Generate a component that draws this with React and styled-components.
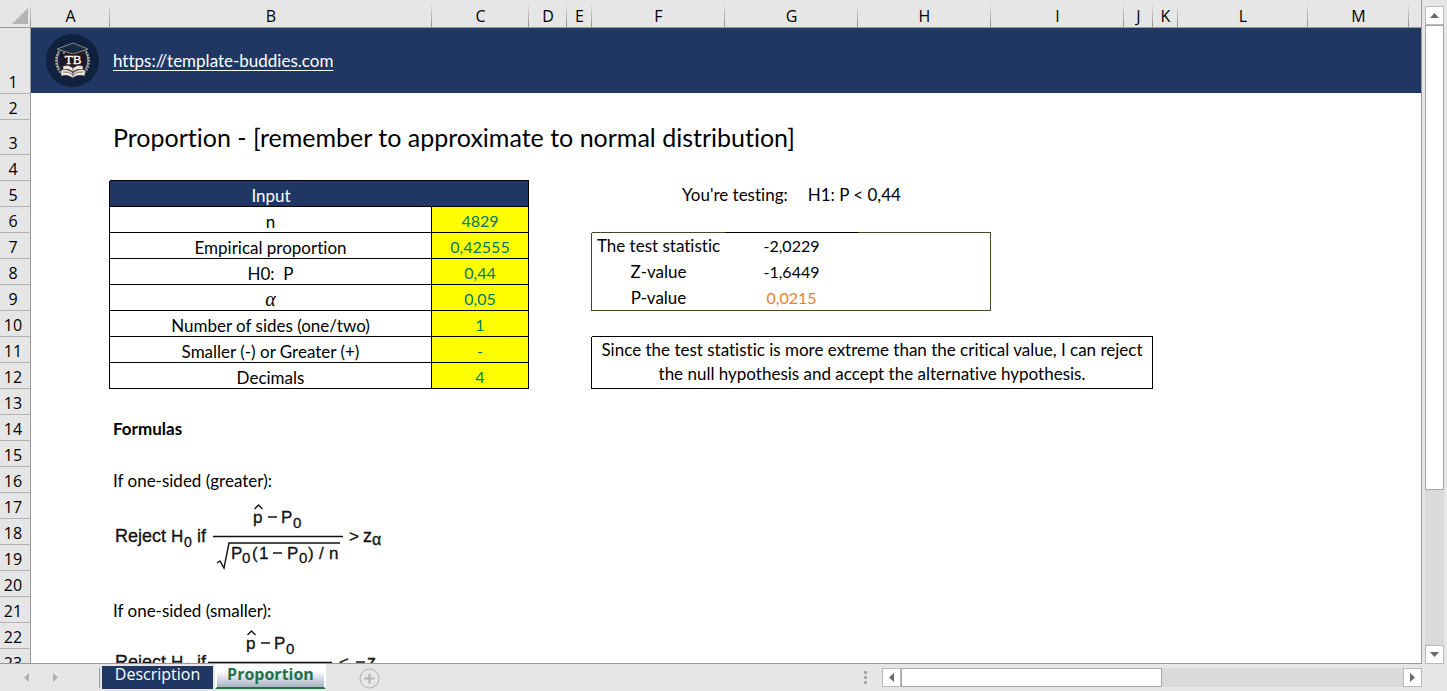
import React from "react";
import styled, { createGlobalStyle, css } from "styled-components";

const NAVY = "#203764";
const CHROME = "#e6e6e6";
const LINE = "#999999";
const OLIVE = "#3a4a22";
const BLACK = "#000000";

const GlobalStyle = createGlobalStyle`
  *, *::before, *::after { box-sizing: border-box; }
  body { margin: 0; background: ${CHROME}; }
  button { font: inherit; margin: 0; padding: 0; }
`;

const Workbook = styled.div`
  display: flex;
  flex-direction: column;
  height: 100vh;
  background: ${CHROME};
  color: ${BLACK};
  font-family: Lato, "Liberation Sans", sans-serif;
  font-size: 17px;
  font-variant-ligatures: none;
  line-height: 24px;
  overflow: hidden;
`;

const Body = styled.div`
  display: flex;
  flex: 1;
  min-height: 0;
`;

const SheetView = styled.main`
  flex: 1;
  min-width: 0;
  overflow: hidden;
  border-right: 1px solid ${LINE};
  border-bottom: 1px solid ${LINE};
  background: #ffffff;
`;

const Grid = styled.table`
  width: 100%;
  table-layout: fixed;
  border-collapse: separate;
  border-spacing: 0;
`;

const Col = styled.col`
  width: ${(p) => (p.$w ? `${p.$w}px` : "auto")};
`;

const headerText = css`
  padding: 0;
  background-color: ${CHROME};
  font-family: "Open Sans", "Noto Sans", sans-serif;
  font-size: 16px;
  font-weight: 400;
  line-height: 22px;
  text-align: center;
`;

const ColumnHeader = styled.th`
  ${headerText}
  height: 28px;
  padding-top: 4px;
  border-bottom: 1px solid ${LINE};
  background-image: linear-gradient(#e6e6e6 10%, #999999 90%);
  background-size: ${(p) => (p.$last ? "0" : "1px")} 100%;
  background-position: right;
  background-repeat: no-repeat;
`;

const Corner = styled(ColumnHeader)`
  padding: 0 3px 3px 0;
  text-align: right;
  vertical-align: bottom;

  svg { display: block; margin-left: auto; }
`;

const RowHeader = styled.th`
  ${headerText}
  padding-right: 4px;
  vertical-align: bottom;
  border-right: 1px solid ${LINE};
  border-bottom: 1px solid #b4b4b4;
`;

const Line = styled.tr`
  height: ${(p) => p.$h}px;
`;

const Cell = styled.td`
  position: relative;
  padding: 0 0 0 3px;
  white-space: nowrap;
  vertical-align: bottom;
  ${(p) => p.$right && css`border-right: 1px solid ${p.$right};`}
  ${(p) => p.$bottom && css`border-bottom: 1px solid ${p.$bottom};`}
`;

const BannerCell = styled(Cell)`
  padding: 0 0 0 ${(p) => (p.$logo ? 15 : 3)}px;
  border-bottom: 1px solid #ffffff;
  background: ${NAVY};
  vertical-align: middle;

  svg { display: block; }
`;

const SiteLink = styled.a`
  color: #ffffff;
  text-decoration: underline;
  text-decoration-thickness: 1px;
  text-underline-offset: 3px;
`;

const Title = styled.h1`
  margin: 0;
  font-size: 25px;
  font-weight: 400;
  line-height: 35px;
`;

const SectionTitle = styled.h2`
  margin: 0;
  font-size: 17px;
  font-weight: 700;
  line-height: 24px;
`;

const CenterCell = styled(Cell)`
  padding: 0;
  text-align: center;
`;

const InputLabel = styled(CenterCell)`
  line-height: 20px;
`;

const InputTitle = styled(InputLabel)`
  background: ${NAVY};
  color: #ffffff;
`;

const InputValue = styled(CenterCell)`
  background: #ffff00;
  color: #00786c;
  font-size: 16px;
  line-height: 22px;
`;

const ResultLabel = styled(CenterCell)`
  vertical-align: middle;
`;

const ResultValue = styled(ResultLabel)`
  color: ${(p) => p.$color || BLACK};
  font-size: 16px;
`;

const Conclusion = styled(CenterCell)`
  padding: 0 8px 2px;
  white-space: normal;
  vertical-align: middle;
`;

const Hypothesis = styled.span`
  margin-left: 20px;
`;

const Alpha = styled.i`
  font-family: "Liberation Serif", serif;
  font-size: 20px;
`;

const FloatingPicture = styled.svg`
  position: absolute;
  top: ${(p) => p.$top}px;
  left: 0;
  font-family: "Liberation Sans", Arial, sans-serif;
  font-size: 17px;
  fill: #111111;
`;

const VerticalBar = styled.div`
  display: flex;
  flex-direction: column;
  width: 25px;
  padding: 6px 3px 0;
`;

const HorizontalBar = styled.div`
  display: flex;
  width: 540px;
  height: 19px;
`;

const ScrollButton = styled.button`
  display: flex;
  align-items: center;
  justify-content: center;
  flex: none;
  width: 19px;
  height: 19px;
  border: 1px solid #b8b8b8;
  background: #ffffff;
`;

const Track = styled.div`
  display: flex;
  flex: 1;
  flex-direction: ${(p) => (p.$vertical ? "column" : "row")};
  background: #dadada;
`;

const Thumb = styled.div`
  flex: 0 0 ${(p) => p.$size};
  border: 1px solid #a6a6a6;
  background: #ffffff;
`;

const BottomBar = styled.footer`
  display: flex;
  align-items: center;
  height: 27px;
  padding-right: 25px;
`;

const SheetNav = styled.div`
  display: flex;
  justify-content: space-between;
  width: 100px;
  height: 20px;
  padding: 0 41px 0 24px;
  border-right: 1px solid ${LINE};
`;

const PlainButton = styled.button`
  display: flex;
  align-items: center;
  border: 0;
  background: transparent;
`;

const Tabs = styled.nav`
  display: flex;
  align-self: flex-start;
  gap: 2px;
  flex: 1;
  padding-left: 2px;
`;

const Tab = styled.button`
  width: 111px;
  height: 25px;
  padding-bottom: 8px;
  border: 0;
  border-top: 2px solid ${CHROME};
  background: ${NAVY};
  color: #ffffff;
  font-family: "Open Sans", "Noto Sans", sans-serif;
  font-size: 16px;
  line-height: 16px;
  ${(p) => p.$active && css`
    padding-bottom: 4px;
    border: 2px solid #ffffff;
    border-top: 0;
    border-bottom: 2px solid #217346;
    background: linear-gradient(#ffffff 30%, #a9b3c8);
    color: #217346;
    font-weight: 700;
  `}
`;

const AddButton = styled(PlainButton)`
  margin: 4px 0 0 31px;
`;

const Grip = styled.div`
  width: 3px;
  height: 14px;
  margin-right: 15px;
  background: repeating-linear-gradient(#a8a8a8 0 3px, transparent 3px 5px);
`;

const columns = [
  ["A", 79], ["B", 322], ["C", 97], ["D", 38], ["E", 25], ["F", 133], ["G", 133],
  ["H", 133], ["I", 133], ["J", 29], ["K", 25], ["L", 130], ["M", 101],
];

const arrows = {
  up: "M0 5 L4.5 0 L9 5Z",
  down: "M0 0 L9 0 L4.5 5Z",
  left: "M5 0 L5 9 L0 4.5Z",
  right: "M0 0 L5 4.5 L0 9Z",
};

function Arrow({ dir, color = "#6a6a6a" }) {
  const upright = dir === "up" || dir === "down";
  return (
    <svg width={upright ? 9 : 5} height={upright ? 5 : 9} fill={color} aria-hidden="true">
      <path d={arrows[dir]} />
    </svg>
  );
}

function Logo() {
  return (
    <svg width="53" height="53" viewBox="0 0 53 53" role="img" aria-label="Template Buddies">
      <circle cx="26.5" cy="26.5" r="26.5" fill="#10203f" />
      <g fill="none" stroke="#b9aa98">
        <path d="M15 15 C8 22 9 33 15 39 M38 15 C45 22 44 33 38 39" strokeWidth="2" strokeDasharray="2 1" />
        <path d="M13 19 C10 25 11 31 14 35 M40 19 C43 25 42 31 39 35" strokeWidth="1" />
      </g>
      <path d="M17 17 V22 H37 V17" fill="#29161d" stroke="#6d3037" />
      <path d="M11 15 L27 9 L42 15 L27 20Z" fill="#182a40" stroke="#8c8982" strokeWidth="1" />
      <path d="M18 18 V25" stroke="#ded3c5" />
      <rect x="15" y="20" width="23" height="12" fill="#24141b" />
      <text x="27" y="30" textAnchor="middle" fontFamily="Liberation Serif, serif" fontSize="13" stroke="#ffffff" strokeWidth=".4" fill="#ffffff">TB</text>
      <path d="M17 32 Q23 30 27 34 Q31 30 37 32 V36 Q31 34 27 38 Q23 34 17 36Z" fill="#f3e9dc" stroke="#302a2b" strokeWidth=".6" />
      <path d="M15 36 Q22 34 27 39 Q32 34 39 36 V42 Q31 40 27 44 Q22 40 15 42Z" fill="#f4ebdf" stroke="#302a2b" strokeWidth=".6" />
      <path d="M17 38 Q23 37 27 41 Q31 37 37 38 M27 34 V43" fill="none" stroke="#5b4b49" strokeWidth=".8" />
    </svg>
  );
}

function Formula({ top, height, shift = 0, barFrom, barTo, label, children }) {
  return (
    <FloatingPicture $top={top} width="300" height={height} role="img" aria-label={label}>
      <g stroke="#111111" strokeWidth=".3">
        <text x="5" y="45" fontSize="18">Reject</text>
        <text x="61" y="45">H</text>
        <text x="74" y="50" fontSize="14">0</text>
        <text x="87" y="45" fontSize="18">if</text>
        <g transform={`translate(${shift} 0)`}>
          <text x="143" y="26">p</text>
          <text x="171" y="26">P</text>
          <text x="183" y="31" fontSize="15">0</text>
          <path d="M144.5 12 L148.5 8 L152.5 12" fill="none" strokeWidth="1.4" />
          <path d="M158 20 H167" strokeWidth="1.5" />
        </g>
        <path d={`M${barFrom} 39.5 H${barTo}`} strokeWidth="1.5" />
        {children}
      </g>
    </FloatingPicture>
  );
}

function Row({ n, h = 26, children }) {
  return (
    <Line $h={h}>
      <RowHeader scope="row">{n}</RowHeader>
      {children || <Cell colSpan={14} />}
    </Line>
  );
}

function InputPair({ label, value }) {
  return (
    <>
      <Cell $right={BLACK} />
      <InputLabel $right={BLACK} $bottom={BLACK}>{label}</InputLabel>
      <InputValue $right={BLACK} $bottom={BLACK}>{value}</InputValue>
    </>
  );
}

function ResultCells({ label, value, color, last }) {
  const edge = last ? OLIVE : undefined;
  return (
    <>
      <Cell />
      <Cell $right={OLIVE} />
      <ResultLabel $bottom={edge}>{label}</ResultLabel>
      <ResultValue $bottom={edge} $color={color}>{value}</ResultValue>
      <Cell $bottom={edge} $right={OLIVE} />
      <Cell colSpan={6} />
    </>
  );
}

function Sheet() {
  return (
    <Grid>
      <colgroup>
        <Col $w={31} />
        {columns.map(([name, w]) => <Col key={name} $w={w} />)}
        <Col />
      </colgroup>
      <thead>
        <tr>
          <Corner aria-label="Select all">
            <svg width="16" height="16" fill="#b4b4b4" aria-hidden="true"><path d="M16 0 V16 H0Z" /></svg>
          </Corner>
          {columns.map(([name]) => <ColumnHeader key={name} scope="col">{name}</ColumnHeader>)}
          <ColumnHeader $last />
        </tr>
      </thead>
      <tbody>
        <Row n={1} h={66}>
          <BannerCell $logo><Logo /></BannerCell>
          <BannerCell colSpan={13}><SiteLink href="https://template-buddies.com">https://template-buddies.com</SiteLink></BannerCell>
        </Row>
        <Row n={2} />
        <Row n={3} h={35}>
          <Cell />
          <Cell colSpan={13}><Title>Proportion - [remember to approximate to normal distribution]</Title></Cell>
        </Row>
        <Row n={4}>
          <Cell />
          <Cell colSpan={2} $bottom={BLACK} />
          <Cell colSpan={11} />
        </Row>
        <Row n={5}>
          <Cell $right={BLACK} />
          <InputTitle $bottom={BLACK}>Input</InputTitle>
          <InputTitle $bottom={BLACK} $right={BLACK} />
          <Cell colSpan={2} />
          <CenterCell colSpan={3}>You're testing:<Hypothesis>H1: P &lt; 0,44</Hypothesis></CenterCell>
          <Cell colSpan={6} />
        </Row>
        <Row n={6}>
          <InputPair label="n" value="4829" />
          <Cell colSpan={2} />
          <Cell $bottom={OLIVE} />
          <Cell $bottom={BLACK} />
          <Cell $bottom={OLIVE} />
          <Cell colSpan={6} />
        </Row>
        <Row n={7}>
          <InputPair label="Empirical proportion" value="0,42555" />
          <ResultCells label="The test statistic" value="-2,0229" />
        </Row>
        <Row n={8}>
          <InputPair label={"H0:\u00a0 P"} value="0,44" />
          <ResultCells label="Z-value" value="-1,6449" />
        </Row>
        <Row n={9}>
          <InputPair label={<Alpha>α</Alpha>} value="0,05" />
          <ResultCells label="P-value" value="0,0215" color="#ed7d31" last />
        </Row>
        <Row n={10}>
          <InputPair label="Number of sides (one/two)" value="1" />
          <Cell colSpan={2} />
          <Cell colSpan={5} $bottom={BLACK} />
          <Cell colSpan={4} />
        </Row>
        <Row n={11}>
          <InputPair label="Smaller (-) or Greater (+)" value="-" />
          <Cell />
          <Cell $right={BLACK} />
          <Conclusion colSpan={5} rowSpan={2} $right={BLACK} $bottom={BLACK}>
            Since the test statistic is more extreme than the critical value, I can reject the null hypothesis and accept the alternative hypothesis.
          </Conclusion>
          <Cell colSpan={4} />
        </Row>
        <Row n={12}>
          <InputPair label="Decimals" value="4" />
          <Cell />
          <Cell $right={BLACK} />
          <Cell colSpan={4} />
        </Row>
        <Row n={13} />
        <Row n={14}>
          <Cell />
          <Cell colSpan={13}><SectionTitle>Formulas</SectionTitle></Cell>
        </Row>
        <Row n={15} />
        <Row n={16}>
          <Cell />
          <Cell colSpan={13}>If one-sided (greater):</Cell>
        </Row>
        <Row n={17}>
          <Cell />
          <Cell colSpan={13}>
            <Formula top={4} height={78} barFrom={103} barTo={233} label="Reject H0 if (p̂ – P0) / √(P0(1 – P0) / n) > zα">
              <text x="121" y="62">P</text>
              <text x="132" y="66" fontSize="15">0</text>
              <text x="142" y="62">(</text>
              <text x="149" y="62">1</text>
              <text x="177" y="62">P</text>
              <text x="189" y="66" fontSize="15">0</text>
              <text x="198" y="62">)</text>
              <text x="209" y="62">/</text>
              <text x="219" y="62">n</text>
              <path d="M163 56 H172" strokeWidth="1.5" />
              <path d="M107 66 L110 64 L114 71 L119 46 H230" fill="none" strokeWidth="1.4" />
              <text x="239" y="45">&gt;</text>
              <text x="253" y="45" fontSize="18">z</text>
              <text x="262" y="48" fontSize="16">α</text>
            </Formula>
          </Cell>
        </Row>
        <Row n={18} />
        <Row n={19} />
        <Row n={20} />
        <Row n={21}>
          <Cell />
          <Cell colSpan={13}>If one-sided (smaller):</Cell>
        </Row>
        <Row n={22}>
          <Cell />
          <Cell colSpan={13}>
            <Formula top={0} height={52} shift={-7} barFrom={98} barTo={222} label="Reject H0 if (p̂ – P0) / √(P0(1 – P0) / n) < –zα">
              <text x="229" y="45">&lt;</text>
              <path d="M246 39 H255" strokeWidth="1.5" />
              <text x="257" y="45" fontSize="18">z</text>
            </Formula>
          </Cell>
        </Row>
        <Row n={23} />
      </tbody>
    </Grid>
  );
}

export default function App() {
  return (
    <Workbook>
      <GlobalStyle />
      <Body>
        <SheetView><Sheet /></SheetView>
        <VerticalBar>
          <ScrollButton aria-label="Scroll up"><Arrow dir="up" /></ScrollButton>
          <Track $vertical><Thumb $size="75%" /></Track>
          <ScrollButton aria-label="Scroll down"><Arrow dir="down" /></ScrollButton>
        </VerticalBar>
      </Body>
      <BottomBar>
        <SheetNav>
          <PlainButton aria-label="Previous sheet"><Arrow dir="left" color="#b0b0b0" /></PlainButton>
          <PlainButton aria-label="Next sheet"><Arrow dir="right" color="#b0b0b0" /></PlainButton>
        </SheetNav>
        <Tabs>
          <Tab>Description</Tab>
          <Tab $active aria-current="page">Proportion</Tab>
          <AddButton aria-label="New sheet">
            <svg width="21" height="21" fill="none" stroke="#b4b4b4" aria-hidden="true">
              <circle cx="10.5" cy="10.5" r="9.5" />
              <path d="M10.5 5.5 V15.5 M5.5 10.5 H15.5" strokeWidth="2" />
            </svg>
          </AddButton>
        </Tabs>
        <Grip />
        <HorizontalBar>
          <ScrollButton aria-label="Scroll left"><Arrow dir="left" /></ScrollButton>
          <Track><Thumb $size="52%" /></Track>
          <ScrollButton aria-label="Scroll right"><Arrow dir="right" /></ScrollButton>
        </HorizontalBar>
      </BottomBar>
    </Workbook>
  );
}
